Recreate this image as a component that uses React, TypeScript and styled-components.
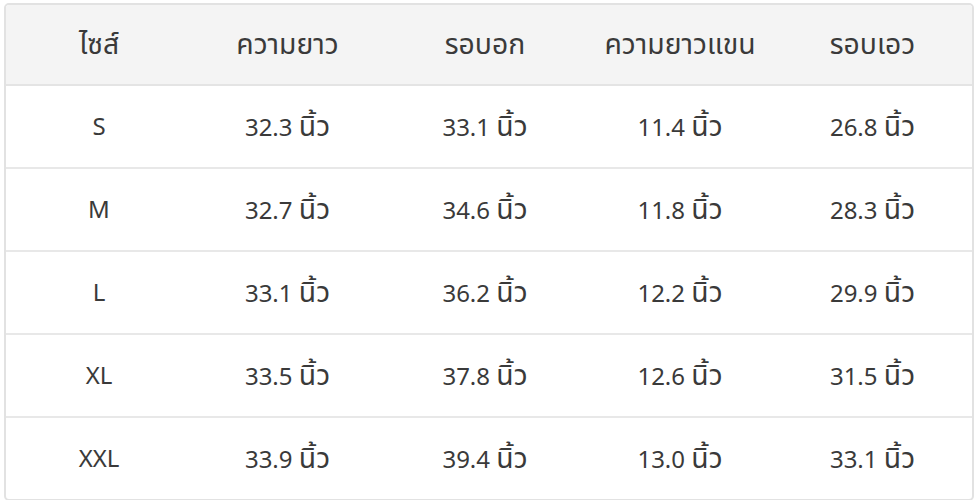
import React from 'react';
import styled, { createGlobalStyle } from 'styled-components';

const GlobalStyle = createGlobalStyle`
  html, body {
    margin: 0;
    padding: 0;
    background: #ffffff;
  }
  body {
    font-family: 'Noto Sans', 'Noto Sans Thai', 'Noto Sans Thai UI', sans-serif;
  }
`;

const Wrapper = styled.div`
  padding: 3px 5px 5px 4px;
`;

const StyledTable = styled.table`
  width: 100%;
  table-layout: fixed;
  border-collapse: separate;
  border-spacing: 0;
  border: 2px solid #e2e2e2;
  border-radius: 5px;
  overflow: hidden;
  color: #3a3a3a;
  font-size: 24px;
  line-height: 1.2;
`;

const HeadCell = styled.th`
  background: #f4f4f4;
  font-weight: 400;
  height: 79px;
  padding: 0 4px;
  text-align: center;
  border-bottom: 2px solid #e4e4e4;
`;

const Cell = styled.td<{ $last?: boolean }>`
  height: 81px;
  padding: 0 4px;
  text-align: center;
  border-bottom: ${({ $last }) => ($last ? 'none' : '2px solid #e8e8e8')};
`;

const Thai = styled.span`
  font-size: 1.18em;
  font-weight: 400;
  line-height: 1;
`;

const widths = [186, 191, 204, 186, 199];

const headers = ['ไซส์', 'ความยาว', 'รอบอก', 'ความยาวแขน', 'รอบเอว'];

const rows = [
  ['S', '32.3', '33.1', '11.4', '26.8'],
  ['M', '32.7', '34.6', '11.8', '28.3'],
  ['L', '33.1', '36.2', '12.2', '29.9'],
  ['XL', '33.5', '37.8', '12.6', '31.5'],
  ['XXL', '33.9', '39.4', '13.0', '33.1'],
];

const App: React.FC = () => {
  return (
    <>
      <GlobalStyle />
      <Wrapper>
        <StyledTable>
          <colgroup>
            {widths.map((w, i) => (
              <col key={i} style={{ width: w }} />
            ))}
          </colgroup>
          <thead>
            <tr>
              {headers.map((h) => (
                <HeadCell key={h}>
                  <Thai>{h}</Thai>
                </HeadCell>
              ))}
            </tr>
          </thead>
          <tbody>
            {rows.map((row, i) => (
              <tr key={row[0]}>
                {row.map((v, j) => (
                  <Cell key={j} $last={i === rows.length - 1}>
                    {j === 0 ? (
                      v
                    ) : (
                      <>
                        {v} <Thai>นิ้ว</Thai>
                      </>
                    )}
                  </Cell>
                ))}
              </tr>
            ))}
          </tbody>
        </StyledTable>
      </Wrapper>
    </>
  );
};

export default App;
